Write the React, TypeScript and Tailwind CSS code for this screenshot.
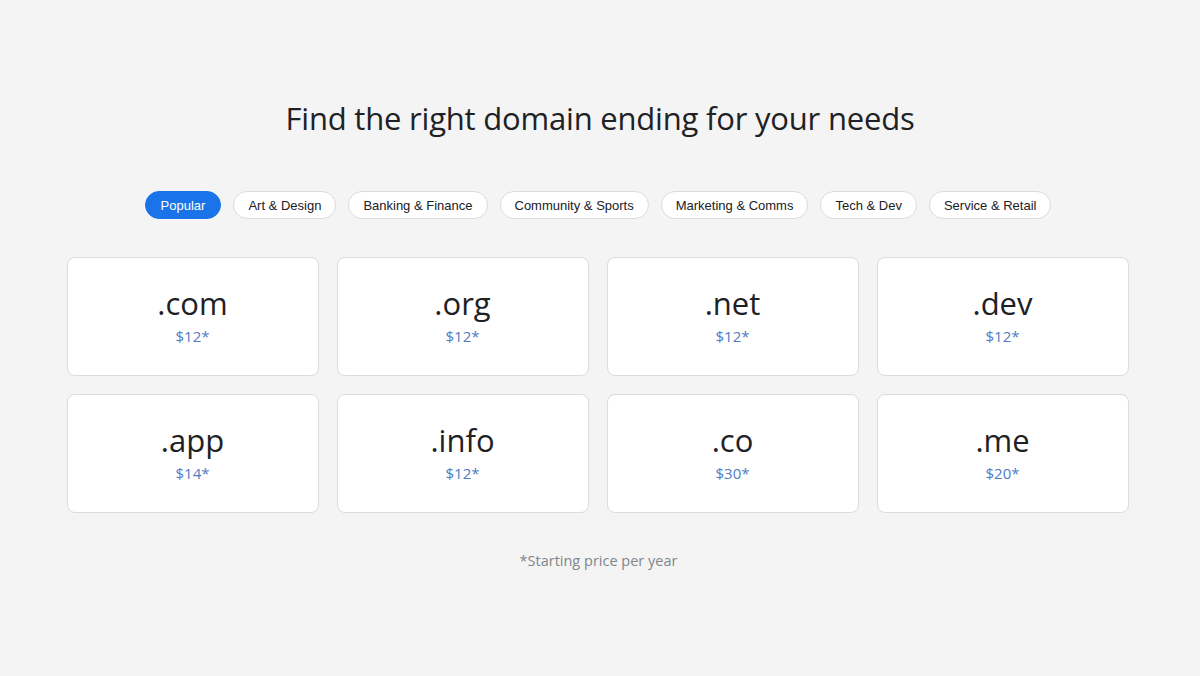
import { useState } from 'react';

const categories = [
  'Popular',
  'Art & Design',
  'Banking & Finance',
  'Community & Sports',
  'Marketing & Comms',
  'Tech & Dev',
  'Service & Retail',
];

const domains = [
  { tld: '.com', price: '$12*' },
  { tld: '.org', price: '$12*' },
  { tld: '.net', price: '$12*' },
  { tld: '.dev', price: '$12*' },
  { tld: '.app', price: '$14*' },
  { tld: '.info', price: '$12*' },
  { tld: '.co', price: '$30*' },
  { tld: '.me', price: '$20*' },
];

export default function App() {
  const [active, setActive] = useState('Popular');

  return (
    <div className="min-h-screen bg-[#f4f4f4] pt-[98px] font-['Open_Sans',sans-serif]">
      <h1 className="text-center text-[31px] leading-[40px] text-[#202124] tracking-[-0.2px]">
        Find the right domain ending for your needs
      </h1>

      {/* Category pills */}
      <div className="mt-[53px] flex justify-center gap-3 font-['Liberation_Sans',Arial,sans-serif] mr-[4px]">
        {categories.map((c) => (
          <button
            key={c}
            onClick={() => setActive(c)}
            className={
              c === active
                ? 'h-7 rounded-full bg-[#1a73e8] px-[15px] pt-px text-[13px] text-white border border-[#1a73e8]'
                : 'h-7 rounded-full bg-white px-[14px] pt-px text-[13px] text-[#202124] border border-[#dadce0]'
            }
          >
            {c}
          </button>
        ))}
      </div>

      {/* Domain cards */}
      <div className="mx-auto mt-[38px] grid w-[1062px] grid-cols-4 gap-[18px] pr-[5px] box-content">
        {domains.map((d) => (
          <div
            key={d.tld}
            className="flex h-[119px] flex-col items-center justify-center rounded-lg border border-[#dadce0] bg-white pb-[4px]"
          >
            <div className="text-[31px] leading-[38px] text-[#202124]">{d.tld}</div>
            <div className="mt-[4px] text-[15px] leading-5 text-[#4f7cc4]">{d.price}</div>
          </div>
        ))}
      </div>

      <p className="mt-[38px] text-center text-[14.5px] leading-5 text-[#80868b] pr-[3px]">
        *Starting price per year
      </p>
    </div>
  );
}
